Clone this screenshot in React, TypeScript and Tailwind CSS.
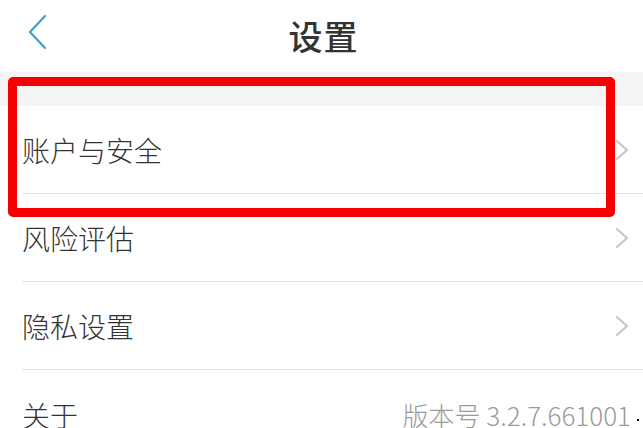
const rows = ['账户与安全', '风险评估', '隐私设置']

function Chevron() {
  return (
    <svg width="14" height="22" viewBox="0 0 14 22" fill="none" stroke="#c6c6c9" strokeWidth="2.2" strokeLinecap="round" strokeLinejoin="round">
      <path d="M2 2 L12 11 L2 20" />
    </svg>
  )
}

export default function App() {
  return (
    <div
      className="relative w-[643px] h-[428px] overflow-hidden bg-white text-[#333]"
      style={{ fontFamily: '"Noto Sans CJK SC", "Noto Sans", sans-serif' }}
    >
      <header className="relative flex h-[72px] items-center justify-center">
        <svg
          className="absolute left-[26px] top-[14px]"
          width="24"
          height="36"
          viewBox="0 0 24 36"
          fill="none"
          stroke="#3fa0d8"
          strokeWidth="2.2"
          strokeLinecap="round"
          strokeLinejoin="round"
        >
          <path d="M19 2 L4 18 L19 34" />
        </svg>
        <h1 className="ml-[4px] text-[34px] font-medium leading-none tracking-[1px] text-[#333]">设置</h1>
      </header>

      <div className="h-[34px] bg-[#f4f4f5]" />

      <ul>
        {rows.map((label) => (
          <li key={label} className="flex h-[88px] items-center pl-[22px]">
            <div className="flex h-full flex-1 items-center justify-between border-b border-[#e3e3e3] pr-[14px]">
              <span className="text-[28px] font-light leading-none">{label}</span>
              <Chevron />
            </div>
          </li>
        ))}
        <li className="flex h-[88px] items-center pl-[22px] pr-[12px]">
          <div className="flex h-full flex-1 items-center justify-between pt-[1px]">
            <span className="text-[28px] font-light leading-none">关于</span>
            <span className="text-[26px] font-light leading-none text-[#9a9a9a]">版本号 3.2.7.661001</span>
          </div>
        </li>
      </ul>

      <div className="absolute left-[637px] top-[419px] h-[2px] w-[2px] bg-black" />

      <div className="pointer-events-none absolute left-[8px] top-[77px] h-[140px] w-[607px] rounded-[5px] border-[9px] border-[#f50000]" />
    </div>
  )
}
